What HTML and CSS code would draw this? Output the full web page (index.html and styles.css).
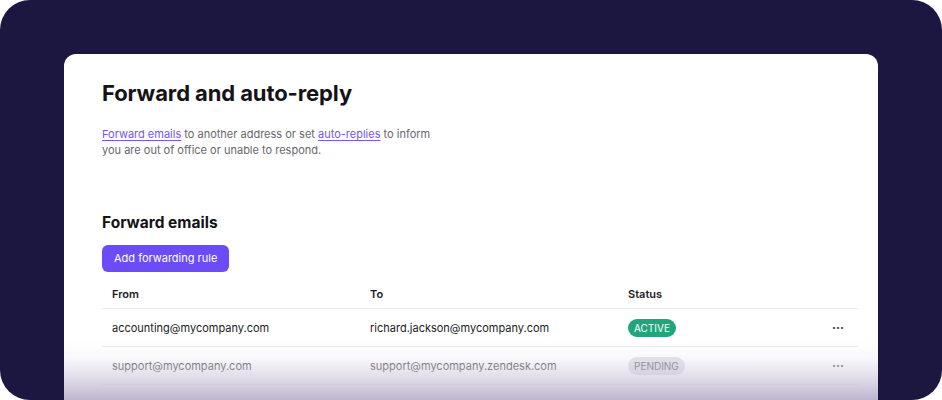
FILE: index.html
```html
<!DOCTYPE html>
<html lang="en">
<head>
<meta charset="utf-8">
<title>Forward and auto-reply</title>
<link rel="stylesheet" href="styles.css">
</head>
<body>
<div class="frame">
  <main class="card">
    <h1 class="title">Forward and auto-reply</h1>
    <p class="intro"><a href="#">Forward emails</a> to another address or set <a href="#">auto-replies</a> to inform you are out of office or unable to respond.</p>

    <section class="section">
      <h2 class="section-title">Forward emails</h2>
      <button class="btn-primary" type="button">Add forwarding rule</button>

      <div class="table">
        <div class="row head">
          <div class="cell">From</div>
          <div class="cell">To</div>
          <div class="cell">Status</div>
          <div class="cell"></div>
        </div>
        <div class="row">
          <div class="cell">accounting@mycompany.com</div>
          <div class="cell">richard.jackson@mycompany.com</div>
          <div class="cell"><span class="badge badge-active">Active</span></div>
          <div class="cell more">···</div>
        </div>
        <div class="row">
          <div class="cell">support@mycompany.com</div>
          <div class="cell">support@mycompany.zendesk.com</div>
          <div class="cell"><span class="badge badge-pending">Pending</span></div>
          <div class="cell more">···</div>
        </div>
        <div class="row">
          <div class="cell">&nbsp;</div>
        </div>
      </div>
    </section>
    <div class="fade"></div>
  </main>
</div>
</body>
</html>
```

FILE: styles.css
```css
* { box-sizing: border-box; }

html, body {
  margin: 0;
  background: #ffffff;
}

body {
  font-family: Inter, "Noto Sans", "Liberation Sans", sans-serif;
  color: #17161c;
}

.frame {
  width: 942px;
  height: 400px;
  background: #1c1741;
  border-radius: 30px;
  overflow: hidden;
  padding: 54px 64px 0;
}

.card {
  position: relative;
  background: #ffffff;
  border-radius: 12px 12px 0 0;
  height: 346px;
  overflow: hidden;
  padding: 24px 20px 0 38px;
}

.title {
  margin: 0;
  font-size: 22px;
  line-height: 30px;
  font-weight: 700;
  letter-spacing: -0.1px;
  color: #141318;
}

.intro {
  margin: 18px 0 0;
  width: 335px;
  font-size: 11px;
  line-height: 16px;
  color: #67666d;
}

.intro a {
  color: #7655f5;
  text-decoration: underline;
  text-underline-offset: 2px;
  text-decoration-thickness: 1px;
}

.section {
  margin-top: 54px;
}

.section-title {
  margin: 0;
  font-size: 15.5px;
  line-height: 22px;
  font-weight: 700;
  color: #141318;
}

.btn-primary {
  margin-top: 11px;
  height: 27px;
  padding: 0 12px;
  border: 0;
  border-radius: 6px;
  background: #6c4cf6;
  color: #ffffff;
  font-family: inherit;
  font-size: 11px;
  line-height: 27px;
}

.table {
  margin-top: 7px;
  width: 756px;
}

.row {
  display: grid;
  grid-template-columns: 258px 258px 1fr 26px;
  align-items: center;
  height: 38px;
  border-bottom: 1px solid #ebeaee;
  font-size: 11px;
  color: #1d1c22;
}

.row.head {
  height: 30px;
  font-weight: 600;
}

.cell {
  padding-left: 10px;
  white-space: nowrap;
}

.more {
  padding-left: 0;
  font-weight: 700;
  color: #3a3940;
  font-size: 12px;
}

.badge {
  display: inline-block;
  height: 18px;
  line-height: 18px;
  padding: 0 6px;
  border-radius: 9px;
  font-size: 10px;
  text-transform: uppercase;
}

.badge-active {
  background: #22a57c;
  color: #ffffff;
}

.badge-pending {
  background: #d9d8de;
  color: #45444b;
}

.fade {
  position: absolute;
  left: 0;
  right: 0;
  bottom: 0;
  height: 60px;
  pointer-events: none;
  background: linear-gradient(to bottom,
    rgba(255, 255, 255, 0) 0%,
    rgba(240, 237, 245, 0.4) 30%,
    rgba(206, 199, 220, 0.72) 70%,
    rgba(186, 176, 204, 0.95) 100%);
}
```
